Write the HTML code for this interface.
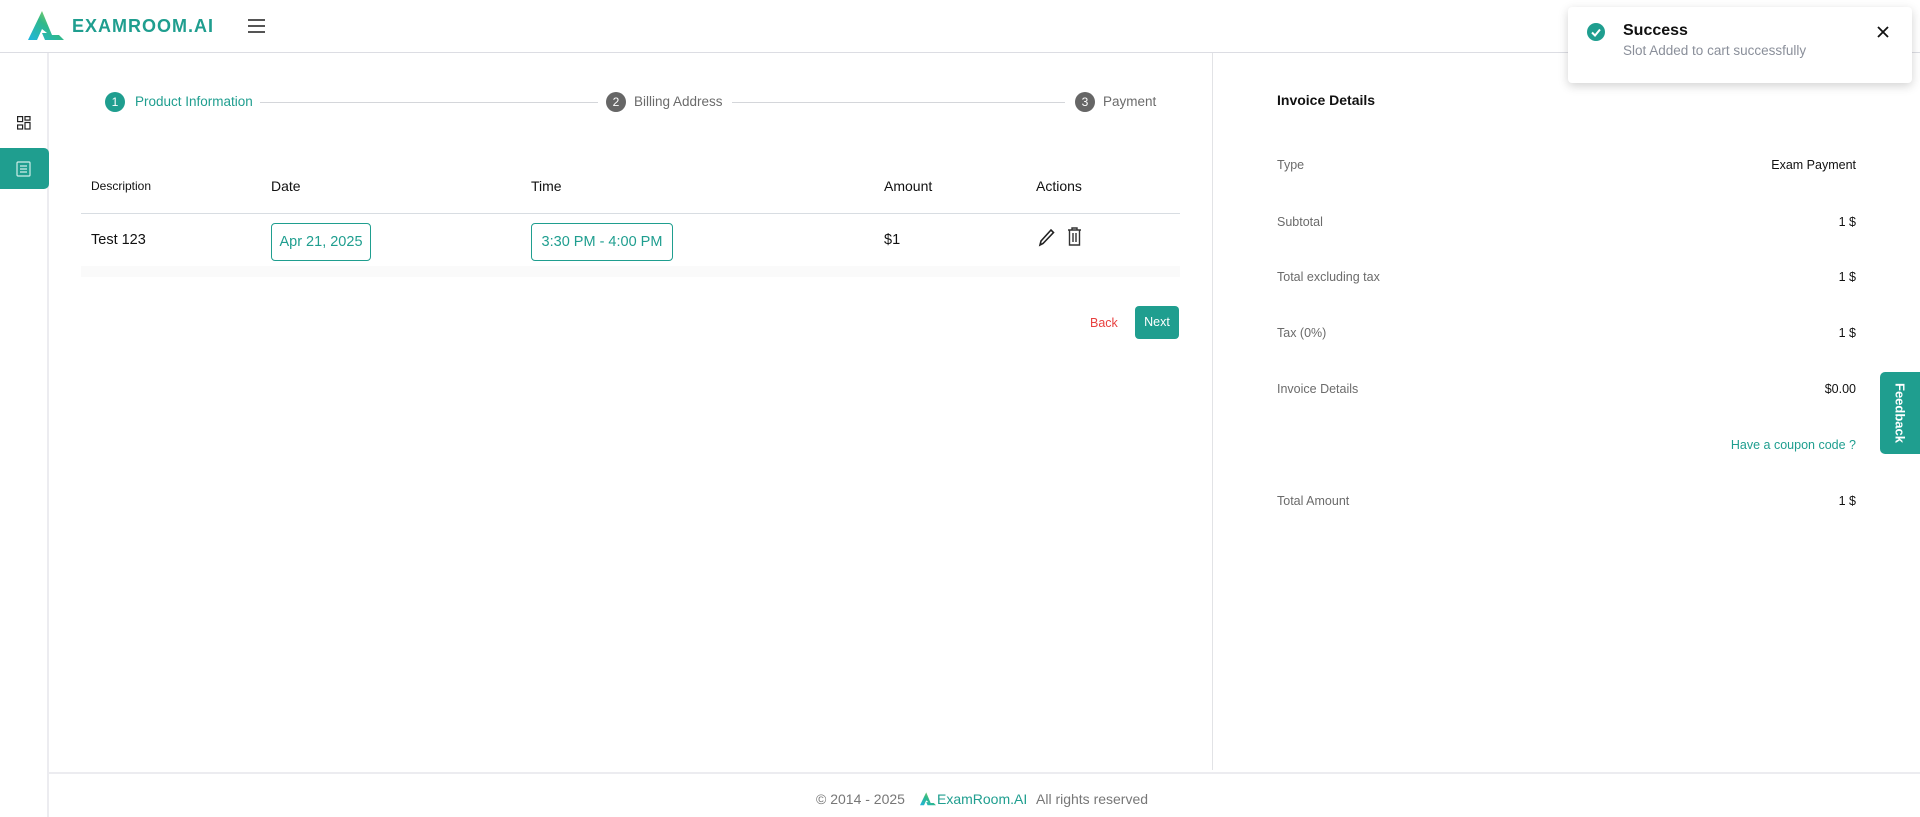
<!DOCTYPE html>
<html><head><meta charset="utf-8"><style>
*{box-sizing:border-box;margin:0;padding:0}
body{width:1920px;height:817px;overflow:hidden;background:#fff;font-family:"Liberation Sans",sans-serif;color:#111;position:relative}
.abs{position:absolute}
.hdr{left:0;top:0;width:1920px;height:53px;border-bottom:1px solid #dcdde3}
.side{left:0;top:53px;width:49px;height:764px;border-right:2px solid #ececf0}
.t{position:absolute;white-space:nowrap}
.gray{color:#6b6b6b}
.inv{font-size:12.5px}
.circ{position:absolute;width:20px;height:20px;border-radius:50%;color:#fff;font-size:12px;text-align:center;line-height:20px}
.line{position:absolute;height:1px;background:#d4d6da;top:102px}
.box{position:absolute;border:1px solid #1f9e8f;border-radius:4px;color:#1f9e8f;font-size:14.5px;text-align:center;line-height:36px;height:38px}
</style></head><body>
<div class="abs hdr"></div>
<svg class="abs" style="left:28px;top:11px" width="36" height="30" viewBox="0 0 36 30">
<defs><linearGradient id="g" x1="0" y1="1" x2="1" y2="0"><stop offset="0" stop-color="#1fb5e0"/><stop offset=".5" stop-color="#2fb88a"/><stop offset="1" stop-color="#c8e04a"/></linearGradient></defs>
<path d="M14 0 L0 29 L9 29 L14 18 L19 22 L14 22 L17 29 L36 29 L31 24 L24 24 Z" fill="url(#g)"/>
</svg>
<div class="t" style="left:72px;top:16px;font-size:18px;font-weight:bold;color:#1f9e8f;letter-spacing:1px">EXAMROOM.AI</div>
<div class="abs" style="left:248px;top:19px;width:17px;height:2px;background:#555;box-shadow:0 6px 0 #555,0 12px 0 #555"></div>
<div class="abs side"></div>
<svg class="abs" style="left:17px;top:116px" width="14" height="14" viewBox="0 0 14 14" fill="none" stroke="#222" stroke-width="1.2"><rect x=".6" y=".6" width="5" height="5"/><rect x="8" y=".6" width="5" height="3.5"/><rect x=".6" y="9" width="5" height="4"/><rect x="8" y="6.5" width="5" height="6.5"/></svg>
<div class="abs" style="left:0;top:148px;width:49px;height:41px;background:#1f9e8f;border-radius:0 5px 5px 0"></div>
<svg class="abs" style="left:16px;top:161px" width="15" height="16" viewBox="0 0 15 16" fill="none" stroke="#cfeee9" stroke-width="1.2"><rect x="1" y="1" width="13" height="14" rx="1"/><path d="M4 5h7M4 8h7M4 11h7"/></svg>
<div class="circ" style="left:105px;top:92px;background:#1f9e8f">1</div>
<div class="t" style="left:135px;top:94px;font-size:13.5px;color:#1f9e8f">Product Information</div>
<div class="line" style="left:260px;width:338px"></div>
<div class="circ" style="left:606px;top:92px;background:#666">2</div>
<div class="t gray" style="left:634px;top:94px;font-size:13.5px">Billing Address</div>
<div class="line" style="left:732px;width:333px"></div>
<div class="circ" style="left:1075px;top:92px;background:#666">3</div>
<div class="t gray" style="left:1103px;top:94px;font-size:13.5px">Payment</div>
<div class="t" style="left:91px;top:179px;font-size:12px;color:#111">Description</div>
<div class="t" style="left:271px;top:178px;font-size:14px">Date</div>
<div class="t" style="left:531px;top:178px;font-size:14px">Time</div>
<div class="t" style="left:884px;top:178px;font-size:14px">Amount</div>
<div class="t" style="left:1036px;top:178px;font-size:14px">Actions</div>
<div class="abs" style="left:81px;top:213px;width:1099px;height:1px;background:#d8dde2"></div>
<div class="t" style="left:91px;top:232px;font-size:14.5px">Test 123</div>
<div class="box" style="left:271px;top:223px;width:100px">Apr 21, 2025</div>
<div class="box" style="left:531px;top:223px;width:142px">3:30 PM - 4:00 PM</div>
<div class="t" style="left:884px;top:232px;font-size:14.5px">$1</div>
<svg class="abs" style="left:1038px;top:227px" width="18" height="20" viewBox="0 0 18 20" fill="none" stroke="#222" stroke-width="1.6"><path d="M2 18 L3 14 L13 3 L15.5 5.5 L5 16.5 Z"/></svg>
<svg class="abs" style="left:1067px;top:227px" width="15" height="19" viewBox="0 0 15 19" fill="none" stroke="#333" stroke-width="1.4"><path d="M1 3h13M5 3V1h5v2M2.5 3v15h10V3M6 6v9M9 6v9"/></svg>
<div class="abs" style="left:81px;top:266px;width:1099px;height:11px;background:#fafafa"></div>
<div class="t" style="left:1090px;top:316px;font-size:12.5px;color:#e8403f">Back</div>
<div class="abs" style="left:1135px;top:306px;width:44px;height:33px;background:#1f9e8f;border-radius:4px;color:#fff;font-size:12.5px;text-align:center;line-height:33px">Next</div>
<div class="abs" style="left:1212px;top:53px;width:1px;height:717px;background:#e2e3e6"></div>
<div class="t" style="left:1277px;top:92px;font-size:14px;font-weight:bold">Invoice Details</div>
<div class="t inv gray" style="left:1277px;top:158px">Type</div><div class="t inv" style="right:64px;top:158px">Exam Payment</div>
<div class="t inv gray" style="left:1277px;top:215px">Subtotal</div><div class="t inv" style="right:64px;top:215px">1 $</div>
<div class="t inv gray" style="left:1277px;top:270px">Total excluding tax</div><div class="t inv" style="right:64px;top:270px">1 $</div>
<div class="t inv gray" style="left:1277px;top:326px">Tax (0%)</div><div class="t inv" style="right:64px;top:326px">1 $</div>
<div class="t inv gray" style="left:1277px;top:382px">Invoice Details</div><div class="t inv" style="right:64px;top:382px">$0.00</div>
<div class="t inv" style="right:64px;top:438px;color:#1f9e8f">Have a coupon code ?</div>
<div class="t inv gray" style="left:1277px;top:494px">Total Amount</div><div class="t inv" style="right:64px;top:494px">1 $</div>
<div class="abs" style="left:1880px;top:372px;width:40px;height:82px;background:#1f9e8f;border-radius:5px 0 0 5px"></div>
<div class="t" style="left:1900px;top:413px;transform:translate(-50%,-50%) rotate(90deg);color:#fff;font-weight:bold;font-size:13px">Feedback</div>
<div class="abs" style="left:49px;top:772px;width:1871px;height:2px;background:#ececf0"></div>
<div class="t" style="left:816px;top:791px;font-size:14px;color:#777">© 2014 - 2025</div>
<svg class="abs" style="left:920px;top:792px" width="16" height="14" viewBox="0 0 36 30"><path d="M14 0 L0 29 L9 29 L14 18 L19 22 L14 22 L17 29 L36 29 L31 24 L24 24 Z" fill="url(#g)"/></svg>
<div class="t" style="left:937px;top:791px;font-size:14px;color:#1f9e8f">ExamRoom.AI</div>
<div class="t" style="left:1036px;top:791px;font-size:14px;color:#777">All rights reserved</div>
<div class="abs" style="left:1568px;top:7px;width:344px;height:76px;background:#fff;border-radius:4px;box-shadow:0 3px 10px rgba(0,0,0,.18)"></div>
<svg class="abs" style="left:1587px;top:23px" width="18" height="18" viewBox="0 0 18 18"><circle cx="9" cy="9" r="9" fill="#1f9e8f"/><path d="M5 9.5l3 3 5-6" stroke="#fff" stroke-width="2" fill="none"/></svg>
<div class="t" style="left:1623px;top:22px;font-size:16px;font-weight:bold">Success</div>
<div class="t" style="left:1623px;top:43px;font-size:13.5px;color:#8a8f9a">Slot Added to cart successfully</div>
<svg class="abs" style="left:1877px;top:26px" width="12" height="12" viewBox="0 0 12 12"><path d="M1 1l10 10M11 1L1 11" stroke="#111" stroke-width="1.8"/></svg>
</body></html>
